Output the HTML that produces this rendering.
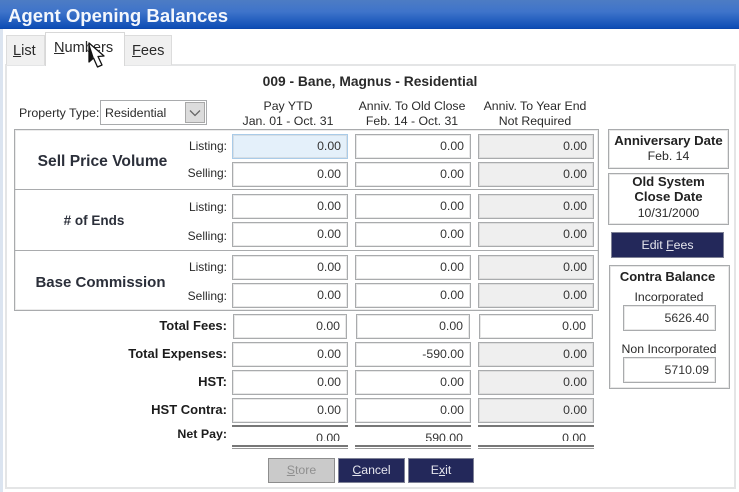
<!DOCTYPE html>
<html>
<head>
<meta charset="utf-8">
<style>
html,body{margin:0;padding:0;background:#fff}
#p{position:relative;width:739px;height:492px;overflow:hidden;background:#fff;font-family:"Liberation Sans",sans-serif;font-size:12.3px;color:#2a2a2a}
#p div{position:absolute;box-sizing:border-box}
.t{white-space:nowrap;line-height:14px}
.r{text-align:right}
.c{text-align:center}
.b{font-weight:bold;color:#1c1c1c}
.lb{font-size:13px}
.s{font-size:12px}
.f{background:#fff;border:1px solid #a9abad;box-shadow:inset 0 0 0 1px rgba(190,190,190,.35);text-align:right;padding-right:6px;line-height:23px;height:25px;width:116px;color:#333}
.d{background:#efefef}
.n{width:116px;overflow:hidden;text-align:right;padding-right:8px;line-height:14px;color:#333;top:431px;height:10px}
.l{height:2px;width:116px;background:#777}
.l2{height:1px;width:116px;background:#999}
.g{background:#a9abad}
.bx{border:1px solid #a9abad;box-shadow:inset 0 0 0 1px rgba(190,190,190,.35);background:#fff}
.btn{background:#23285a;color:#e6e6ee;text-align:center;border:1px solid #7f8296;line-height:23px;height:25px}
u{text-decoration:underline}
</style>
</head>
<body>
<div id="p">
<div style="left:0;top:0;width:739px;height:29px;background:linear-gradient(#4d7cc4,#3f74ca 40%,#0f4eb6 95%,#0b45a8)"></div>
<div class="t" style="left:8px;top:5px;font-size:18.6px;line-height:22px;font-weight:bold;color:#f4f7fc">Agent Opening Balances</div>
<div style="left:0;top:29px;width:3px;height:463px;background:#dbe4f0"></div>

<div style="left:5px;top:64px;width:731px;height:425px;border:2px solid #e4e5e6;background:#fff"></div>
<div style="left:6px;top:35px;width:39px;height:30px;background:#f0f0f0;border:1px solid #dcdcdc;border-bottom:none"></div>
<div style="left:124px;top:35px;width:48px;height:30px;background:#f0f0f0;border:1px solid #dcdcdc;border-bottom:none"></div>
<div style="left:45px;top:32px;width:80px;height:34px;background:#fff;border:1px solid #d8d8d8;border-bottom:none"></div>
<div class="t" style="left:13px;top:43px;font-size:14.6px;line-height:16px"><u>L</u>ist</div>
<div class="t" style="left:54px;top:40px;font-size:14.6px;line-height:16px"><u>N</u>umbers</div>
<div class="t" style="left:132px;top:43px;font-size:14.6px;line-height:16px"><u>F</u>ees</div>

<div class="t b" style="left:130px;top:74px;width:480px;text-align:center;font-size:13.8px;line-height:16px;color:#2a2a2a">009 - Bane, Magnus - Residential</div>

<div class="t" style="left:19px;top:106px;font-size:12.4px">Property Type:</div>
<div style="left:100px;top:100px;width:107px;height:25px;border:1px solid #a9abad;background:#fff"></div>
<div class="t" style="left:105px;top:106px;font-size:12.4px">Residential</div>
<div style="left:185px;top:102px;width:20px;height:21px;background:#dcdcdc;border:1px solid #a8a8a8"></div>
<svg style="position:absolute;left:189px;top:109px" width="12" height="8"><path d="M1 1.5L6 6.5L11 1.5" fill="none" stroke="#666" stroke-width="1.3"/></svg>

<div class="t c" style="left:230px;top:99px;width:116px">Pay YTD</div>
<div class="t c" style="left:230px;top:114px;width:116px">Jan. 01 - Oct. 31</div>
<div class="t c" style="left:347px;top:99px;width:130px">Anniv. To Old Close</div>
<div class="t c" style="left:347px;top:114px;width:130px">Feb. 14 - Oct. 31</div>
<div class="t c" style="left:469px;top:99px;width:132px">Anniv. To Year End</div>
<div class="t c" style="left:469px;top:114px;width:132px">Not Required</div>

<div style="left:14px;top:129px;width:585px;height:182px;border:1px solid #a9abad;box-shadow:inset 0 0 0 1px rgba(190,190,190,.3)"></div>
<div class="g" style="left:15px;top:189px;width:584px;height:1px"></div>
<div class="g" style="left:15px;top:250px;width:584px;height:1px"></div>

<div class="t b c" style="left:15px;top:152px;width:175px;font-size:15.6px;line-height:18px;color:#2b2f3a;padding-top:1px">Sell Price Volume</div>
<div class="t b c" style="left:14px;top:212px;width:160px;font-size:13.5px;line-height:17px;color:#2b2f3a"># of Ends</div>
<div class="t b c" style="left:13px;top:274px;width:175px;font-size:15px;line-height:18px;color:#2b2f3a">Base Commission</div>

<div class="t r s" style="left:170px;top:139px;width:57px">Listing:</div>
<div class="t r s" style="left:170px;top:166px;width:57px">Selling:</div>
<div class="t r s" style="left:170px;top:200px;width:57px">Listing:</div>
<div class="t r s" style="left:170px;top:229px;width:57px">Selling:</div>
<div class="t r s" style="left:170px;top:260px;width:57px">Listing:</div>
<div class="t r s" style="left:170px;top:289px;width:57px">Selling:</div>

<div class="f" style="left:232px;top:134px;background:#e4f0fa;border-color:#a9cbe8">0.00</div>
<div class="f" style="left:355px;top:134px">0.00</div>
<div class="f d" style="left:478px;top:134px">0.00</div>
<div class="f" style="left:232px;top:162px">0.00</div>
<div class="f" style="left:355px;top:162px">0.00</div>
<div class="f d" style="left:478px;top:162px">0.00</div>
<div class="f" style="left:232px;top:194px">0.00</div>
<div class="f" style="left:355px;top:194px">0.00</div>
<div class="f d" style="left:478px;top:194px">0.00</div>
<div class="f" style="left:232px;top:222px">0.00</div>
<div class="f" style="left:355px;top:222px">0.00</div>
<div class="f d" style="left:478px;top:222px">0.00</div>
<div class="f" style="left:232px;top:255px">0.00</div>
<div class="f" style="left:355px;top:255px">0.00</div>
<div class="f d" style="left:478px;top:255px">0.00</div>
<div class="f" style="left:232px;top:283px">0.00</div>
<div class="f" style="left:355px;top:283px">0.00</div>
<div class="f d" style="left:478px;top:283px">0.00</div>

<div class="t b r lb" style="left:100px;top:319px;width:127px">Total Fees:</div>
<div class="t b r lb" style="left:100px;top:347px;width:127px">Total Expenses:</div>
<div class="t b r lb" style="left:100px;top:375px;width:127px">HST:</div>
<div class="t b r lb" style="left:100px;top:403px;width:127px">HST Contra:</div>
<div class="t b r" style="left:100px;top:427px;width:127px;font-size:12.4px">Net Pay:</div>

<div class="f" style="left:233px;top:314px;width:114px">0.00</div>
<div class="f" style="left:356px;top:314px;width:114px">0.00</div>
<div class="f" style="left:479px;top:314px;width:114px">0.00</div>
<div class="f" style="left:232px;top:342px">0.00</div>
<div class="f" style="left:355px;top:342px">-590.00</div>
<div class="f d" style="left:478px;top:342px">0.00</div>
<div class="f" style="left:232px;top:370px">0.00</div>
<div class="f" style="left:355px;top:370px">0.00</div>
<div class="f d" style="left:478px;top:370px">0.00</div>
<div class="f" style="left:232px;top:398px">0.00</div>
<div class="f" style="left:355px;top:398px">0.00</div>
<div class="f d" style="left:478px;top:398px">0.00</div>

<div class="l" style="left:232px;top:425px"></div>
<div class="l" style="left:355px;top:425px"></div>
<div class="l" style="left:478px;top:425px"></div>
<div class="n" style="left:232px">0.00</div>
<div class="n" style="left:355px">590.00</div>
<div class="n" style="left:478px">0.00</div>
<div class="l" style="left:232px;top:445px"></div>
<div class="l" style="left:355px;top:445px"></div>
<div class="l" style="left:478px;top:445px"></div>
<div class="l2" style="left:232px;top:448px"></div>
<div class="l2" style="left:355px;top:448px"></div>
<div class="l2" style="left:478px;top:448px"></div>

<div class="btn" style="left:268px;top:458px;width:67px;background:#cacaca;color:#8f8f8f;border:1px solid #8d8d8d"><u>S</u>tore</div>
<div class="btn" style="left:338px;top:458px;width:67px"><u>C</u>ancel</div>
<div class="btn" style="left:408px;top:458px;width:66px">E<u>x</u>it</div>

<div class="bx" style="left:608px;top:129px;width:121px;height:40px"></div>
<div class="t b c" style="left:608px;top:134px;width:121px;color:#222;font-size:13.2px">Anniversary Date</div>
<div class="t c" style="left:608px;top:149px;width:121px">Feb. 14</div>
<div class="bx" style="left:608px;top:173px;width:121px;height:52px"></div>
<div class="t b c" style="left:608px;top:175px;width:121px;color:#222;font-size:13.2px">Old System</div>
<div class="t b c" style="left:608px;top:190px;width:121px;color:#222;font-size:13.2px">Close Date</div>
<div class="t c" style="left:608px;top:206px;width:121px">10/31/2000</div>

<div class="btn" style="left:611px;top:232px;width:113px;height:26px;line-height:24px">Edit <u>F</u>ees</div>

<div class="bx" style="left:609px;top:265px;width:121px;height:124px"></div>
<div class="t b c" style="left:607px;top:270px;width:121px;color:#222;font-size:13px">Contra Balance</div>
<div class="t c" style="left:609px;top:290px;width:120px">Incorporated</div>
<div class="f" style="left:623px;top:305px;width:93px;height:26px;line-height:24px">5626.40</div>
<div class="t c" style="left:609px;top:342px;width:120px">Non Incorporated</div>
<div class="f" style="left:623px;top:357px;width:93px;height:26px;line-height:24px">5710.09</div>

<svg style="position:absolute;left:86px;top:41px" width="24" height="30"><path d="M3 2L3 21L7.5 17L11.5 26L16 24L12 15.5L18 15Z" fill="#fff" stroke="#111" stroke-width="1.3" stroke-linejoin="round"/><path d="M3 2L3 21L7.5 16Z" fill="#111"/></svg>
</div>
</body>
</html>
